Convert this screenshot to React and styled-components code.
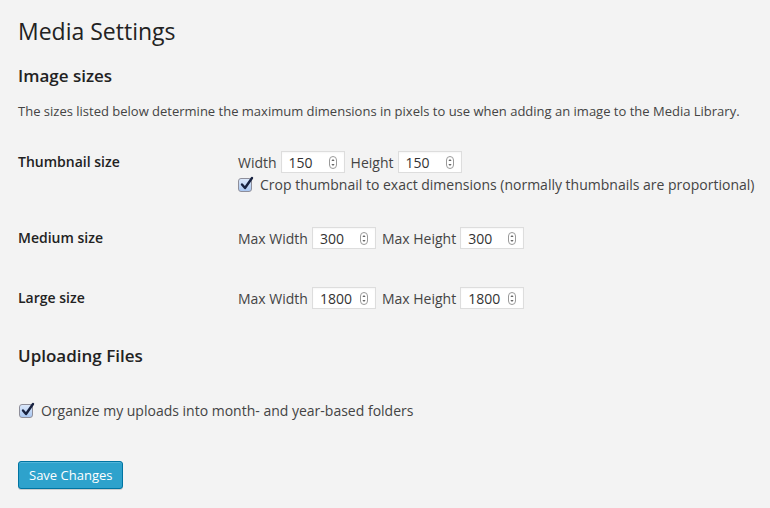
import styled, { createGlobalStyle } from "styled-components"

const GlobalStyle = createGlobalStyle`
  html, body {
    margin: 0;
    padding: 0;
    background: #f3f3f3;
    overflow: hidden;
  }
  body {
    font-family: "Open Sans", "Liberation Sans", sans-serif;
    font-size: 13px;
    color: #444;
  }
`

const Page = styled.div`
  padding: 0 0 0 18px;
  min-height: 508px;
  box-sizing: border-box;
  background: #f3f3f3;
`

const Title = styled.h1`
  margin: 17px 0 0;
  font-size: 23px;
  font-weight: 400;
  line-height: 29px;
  color: #222;
`

const SectionTitle = styled.h2`
  margin: ${props => props.top}px 0 0;
  font-size: 17px;
  font-weight: 600;
  line-height: 22px;
  color: #222;
`

const Desc = styled.p`
  margin: 14px 0 0;
  line-height: 20px;
`

const FormTable = styled.div`
  margin-top: 11px;
`

const Row = styled.div`
  display: grid;
  grid-template-columns: 220px 1fr;
  padding: 19px 0 ${props => props.bottom}px;
`

const RowLabel = styled.div`
  font-size: 14px;
  font-weight: 600;
  color: #222;
  line-height: 22px;
`

const Fields = styled.div`
  display: flex;
  flex-direction: column;
  gap: 2px;
`

const FieldLine = styled.div`
  display: flex;
  align-items: center;
  height: 22px;
  font-size: 14px;
`

const FieldLabel = styled.label`
  margin-right: 4px;
  white-space: nowrap;
`

const NumberBox = styled.div`
  display: flex;
  align-items: center;
  width: 64px;
  height: 22px;
  box-sizing: border-box;
  background: #fff;
  border: 1px solid #ddd;
  box-shadow: inset 0 1px 2px rgba(0, 0, 0, 0.04);
  margin-right: 6px;
  padding: 0 7px 0 7px;
`

const NumberInput = styled.input`
  flex: 1;
  min-width: 0;
  border: none;
  outline: none;
  background: transparent;
  padding: 0;
  font-family: inherit;
  font-size: 14px;
  color: #333;
`

const CheckLine = styled.label`
  display: flex;
  align-items: center;
  gap: 8px;
  font-size: 14px;
  line-height: 20px;
  color: #444;
  white-space: nowrap;
`

const CheckWrap = styled.div`
  margin-top: ${props => props.top}px;
  padding-left: 1px;
`

const Box = styled.span`
  position: relative;
  display: inline-block;
  width: 14px;
  height: 14px;
  box-sizing: border-box;
  border: 1px solid #8e8e9a;
  border-radius: 3px;
  background: linear-gradient(#dbe8fb, #a9c6f0);
  flex-shrink: 0;
`

const Tick = styled.svg`
  position: absolute;
  left: 1px;
  top: -3px;
`

const SaveButton = styled.button`
  margin-top: 40px;
  height: 28px;
  padding: 0 10px;
  background: #2ea2cc;
  border: 1px solid #0074a2;
  border-radius: 3px;
  box-shadow: inset 0 1px 0 rgba(120, 200, 230, 0.5), 0 1px 0 rgba(0, 0, 0, 0.15);
  color: #fff;
  font-family: inherit;
  font-size: 13px;
  line-height: 26px;
  cursor: pointer;
`

const Spinner = () => (
  <svg width="8" height="13" viewBox="0 0 8 13">
    <rect x="0.5" y="0.5" width="7" height="12" rx="3.5" fill="#fff" stroke="#9a9a9a" />
    <path d="M4 3 L5.6 5 L2.4 5 Z" fill="#666" />
    <path d="M4 10 L5.6 8 L2.4 8 Z" fill="#666" />
  </svg>
)

const Checkbox = () => (
  <Box>
    <Tick width="14" height="15" viewBox="0 0 14 15">
      <path d="M2 8.5 L5 12 L12 2" fill="none" stroke="#17213f" strokeWidth="2.4" strokeLinecap="round" strokeLinejoin="round" />
    </Tick>
  </Box>
)

const Num = ({ value }) => (
  <NumberBox>
    <NumberInput type="text" defaultValue={value} />
    <Spinner />
  </NumberBox>
)

const sizes = [
  { label: "Medium size", w: "300", h: "300" },
  { label: "Large size", w: "1800", h: "1800" },
]

const App = () => {
  return (
    <Page>
      <GlobalStyle />
      <Title>Media Settings</Title>

      <SectionTitle top={19}>Image sizes</SectionTitle>
      <Desc>The sizes listed below determine the maximum dimensions in pixels to use when adding an image to the Media Library.</Desc>

      <FormTable>
        <Row bottom={13}>
          <RowLabel>Thumbnail size</RowLabel>
          <Fields>
            <FieldLine>
              <FieldLabel>Width</FieldLabel>
              <Num value="150" />
              <FieldLabel>Height</FieldLabel>
              <Num value="150" />
            </FieldLine>
            <CheckLine>
              <Checkbox />
              Crop thumbnail to exact dimensions (normally thumbnails are proportional)
            </CheckLine>
          </Fields>
        </Row>

        {sizes.map(s => (
          <Row key={s.label} bottom={19}>
            <RowLabel>{s.label}</RowLabel>
            <Fields>
              <FieldLine>
                <FieldLabel>Max Width</FieldLabel>
                <Num value={s.w} />
                <FieldLabel>Max Height</FieldLabel>
                <Num value={s.h} />
              </FieldLine>
            </Fields>
          </Row>
        ))}
      </FormTable>

      <SectionTitle top={17}>Uploading Files</SectionTitle>

      <CheckWrap top={34}>
        <CheckLine>
          <Checkbox />
          Organize my uploads into month- and year-based folders
        </CheckLine>
      </CheckWrap>

      <SaveButton>Save Changes</SaveButton>
    </Page>
  )
}

export default App
